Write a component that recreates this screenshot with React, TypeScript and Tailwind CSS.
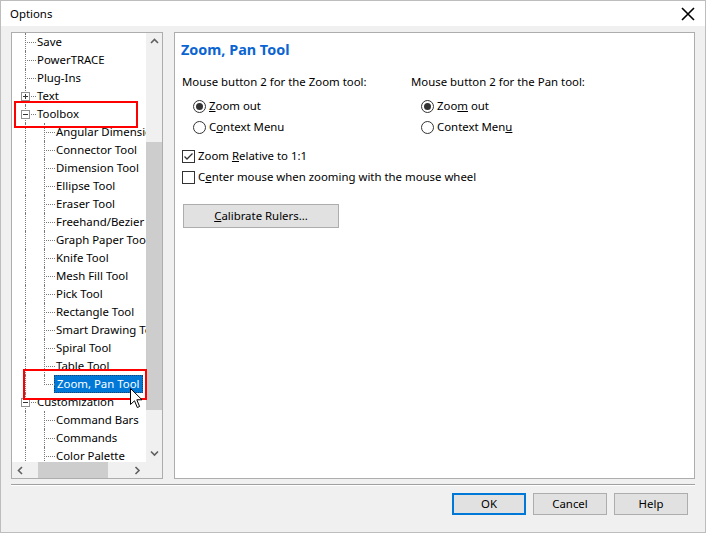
import React from 'react';

type Item = { t: string; l: 1 | 2; exp?: '+' | '-'; last?: boolean; sel?: boolean };

const items: Item[] = [
  { t: 'Save', l: 1 },
  { t: 'PowerTRACE', l: 1 },
  { t: 'Plug-Ins', l: 1 },
  { t: 'Text', l: 1, exp: '+' },
  { t: 'Toolbox', l: 1, exp: '-' },
  { t: 'Angular Dimension Tool', l: 2 },
  { t: 'Connector Tool', l: 2 },
  { t: 'Dimension Tool', l: 2 },
  { t: 'Ellipse Tool', l: 2 },
  { t: 'Eraser Tool', l: 2 },
  { t: 'Freehand/Bezier Tool', l: 2 },
  { t: 'Graph Paper Tool', l: 2 },
  { t: 'Knife Tool', l: 2 },
  { t: 'Mesh Fill Tool', l: 2 },
  { t: 'Pick Tool', l: 2 },
  { t: 'Rectangle Tool', l: 2 },
  { t: 'Smart Drawing Tool', l: 2 },
  { t: 'Spiral Tool', l: 2 },
  { t: 'Table Tool', l: 2 },
  { t: 'Zoom, Pan Tool', l: 2, last: true, sel: true },
  { t: 'Customization', l: 1, exp: '-' },
  { t: 'Command Bars', l: 2 },
  { t: 'Commands', l: 2 },
  { t: 'Color Palette', l: 2 },
];

function Row({ it }: { it: Item }) {
  return (
    <div className="relative h-[18px] flex items-center whitespace-nowrap">
      <span className="absolute left-[13px] top-0 h-[18px] border-l border-dotted border-[#7a7a7a]" />
      {it.l === 1 && <span className="absolute left-[15px] top-[9px] w-[9px] border-t border-dotted border-[#7a7a7a]" />}
      {it.exp && (
        <span className="absolute left-[9px] top-[5px] w-[9px] h-[9px] border border-[#919191] bg-white">
          <span className="absolute left-[1px] top-[3px] w-[5px] h-px bg-[#333]" />
          {it.exp === '+' && <span className="absolute left-[3px] top-[1px] w-px h-[5px] bg-[#333]" />}
        </span>
      )}
      {it.l === 2 && (
        <>
          <span
            className={
              it.last
                ? 'absolute left-[32px] top-0 h-[10px] border-l border-dotted border-[#7a7a7a]'
                : 'absolute left-[32px] top-0 h-[18px] border-l border-dotted border-[#7a7a7a]'
            }
          />
          <span className="absolute left-[34px] top-[9px] w-[9px] border-t border-dotted border-[#7a7a7a]" />
        </>
      )}
      {it.l === 1 ? (
        <span className="ml-[25px] leading-[18px]">{it.t}</span>
      ) : it.sel ? (
        <span className="ml-[42px] h-[18px] leading-[16px] px-[2px] bg-[#0078d7] text-white border border-dotted border-[#1c3f66]">
          {it.t}
        </span>
      ) : (
        <span className="ml-[44px] leading-[18px]">{it.t}</span>
      )}
    </div>
  );
}

function Chevron({ dir }: { dir: 'up' | 'down' | 'left' | 'right' }) {
  const d =
    dir === 'up'
      ? 'M1 5 L4.5 1.5 L8 5'
      : dir === 'down'
      ? 'M1 1.5 L4.5 5 L8 1.5'
      : dir === 'left'
      ? 'M5 1 L1.5 4.5 L5 8'
      : 'M1.5 1 L5 4.5 L1.5 8';
  const horiz = dir === 'up' || dir === 'down';
  return (
    <svg width={horiz ? 9 : 7} height={horiz ? 7 : 9} viewBox={horiz ? '0 0 9 7' : '0 0 7 9'}>
      <path d={d} fill="none" stroke="#606060" strokeWidth="1.6" />
    </svg>
  );
}

function Radio({ checked }: { checked?: boolean }) {
  return (
    <span className="w-[13px] h-[13px] rounded-full border border-[#333] bg-white flex items-center justify-center shrink-0">
      {checked && <span className="w-[7px] h-[7px] rounded-full bg-[#333]" />}
    </span>
  );
}

function Check({ checked }: { checked?: boolean }) {
  return (
    <span className="w-[13px] h-[13px] border border-[#333] bg-white flex items-center justify-center shrink-0">
      {checked && (
        <svg width="11" height="11" viewBox="0 0 11 11">
          <path d="M1.5 5.5 L4 8 L9.5 2.5" fill="none" stroke="#333" strokeWidth="1.3" />
        </svg>
      )}
    </span>
  );
}

export default function App() {
  return (
    <div className="w-[706px] h-[533px] relative flex flex-col bg-[#f0f0f0] border border-[#bdbdbd] text-[11.4px] text-black font-['Noto_Sans','Liberation_Sans',sans-serif] overflow-hidden">
      {/* Title bar */}
      <div className="h-[25px] bg-white flex items-center justify-between pl-[9px] pr-[10px]">
        <span>Options</span>
        <svg width="14" height="14" viewBox="0 0 14 14">
          <path d="M1 1 L13 13 M13 1 L1 13" stroke="#000" strokeWidth="1.6" />
        </svg>
      </div>

      {/* Body */}
      <div className="flex pt-[6px] pl-[10px] gap-[11px]">
        {/* Tree */}
        <div className="w-[152px] h-[447px] border border-[#adadad] bg-white flex flex-col">
          <div className="flex h-[429px]">
            <div className="w-[134px] h-[429px] overflow-hidden">
              {items.map((it, i) => (
                <Row key={i} it={it} />
              ))}
            </div>
            <div className="w-[16px] h-[429px] bg-[#f0f0f0] flex flex-col">
              <div className="h-[17px] flex items-center justify-center">
                <Chevron dir="up" />
              </div>
              <div className="flex-1">
                <div className="mt-[92px] h-[268px] bg-[#cdcdcd]" />
              </div>
              <div className="h-[17px] flex items-center justify-center">
                <Chevron dir="down" />
              </div>
            </div>
          </div>
          <div className="flex h-[16px]">
            <div className="w-[134px] h-[16px] bg-[#f0f0f0] flex">
              <div className="w-[17px] flex items-center justify-center">
                <Chevron dir="left" />
              </div>
              <div className="flex-1">
                <div className="ml-[9px] w-[70px] h-[16px] bg-[#cdcdcd]" />
              </div>
              <div className="w-[17px] flex items-center justify-center">
                <Chevron dir="right" />
              </div>
            </div>
            <div className="w-[16px] h-[16px] bg-[#f0f0f0]" />
          </div>
        </div>

        {/* Panel */}
        <div className="w-[521px] h-[447px] border border-[#adadad] bg-white flex flex-col">
          <div className="mt-[7px] ml-[6px] h-[20px] leading-[20px] text-[14.4px] font-bold text-[#0a64d2]">
            Zoom, Pan Tool
          </div>
          <div className="mt-[13px] ml-[7px] flex">
            <div className="w-[229px] flex flex-col">
              <div className="h-[18px] leading-[18px]">Mouse button 2 for the Zoom tool:</div>
              <div className="mt-[6px] ml-[11px] flex flex-col gap-[3px]">
                <div className="h-[18px] flex items-center gap-[3px]">
                  <Radio checked />
                  <span>
                    <span className="underline">Z</span>oom out
                  </span>
                </div>
                <div className="h-[18px] flex items-center gap-[3px]">
                  <Radio />
                  <span>
                    C<span className="underline">o</span>ntext Menu
                  </span>
                </div>
              </div>
            </div>
            <div className="flex flex-col">
              <div className="h-[18px] leading-[18px]">Mouse button 2 for the Pan tool:</div>
              <div className="mt-[6px] ml-[10px] flex flex-col gap-[3px]">
                <div className="h-[18px] flex items-center gap-[3px]">
                  <Radio checked />
                  <span>
                    Zoo<span className="underline">m</span> out
                  </span>
                </div>
                <div className="h-[18px] flex items-center gap-[3px]">
                  <Radio />
                  <span>
                    Context Men<span className="underline">u</span>
                  </span>
                </div>
              </div>
            </div>
          </div>
          <div className="mt-[11px] ml-[7px] flex flex-col gap-[3px]">
            <div className="h-[18px] flex items-center gap-[3px]">
              <Check checked />
              <span>
                Zoom <span className="underline">R</span>elative to 1:1
              </span>
            </div>
            <div className="h-[18px] flex items-center gap-[3px]">
              <Check />
              <span>
                C<span className="underline">e</span>nter mouse when zooming with the mouse wheel
              </span>
            </div>
          </div>
          <div className="mt-[18px] ml-[8px] w-[156px] h-[24px] border border-[#adadad] bg-[#e1e1e1] flex items-center justify-center">
            <span>
              <span className="underline">C</span>alibrate Rulers...
            </span>
          </div>
        </div>
      </div>

      {/* Separator */}
      <div className="mt-[5px] ml-[10px] w-[684px] border-t border-[#a0a0a0] border-b border-b-white" />

      {/* Buttons */}
      <div className="mt-[7px] flex justify-end gap-[7px] pr-[17px]">
        <div className="w-[74px] h-[22px] border-2 border-[#0078d7] bg-[#e1e1e1] flex items-center justify-center">OK</div>
        <div className="w-[74px] h-[22px] border border-[#adadad] bg-[#e1e1e1] flex items-center justify-center">Cancel</div>
        <div className="w-[74px] h-[22px] border border-[#adadad] bg-[#e1e1e1] flex items-center justify-center">Help</div>
      </div>

      {/* Annotations */}
      <div className="absolute left-[13px] top-[100px] w-[124px] h-[27px] border-2 border-[#ff0000]" />
      <div className="absolute left-[22px] top-[368px] w-[124px] h-[31px] border-2 border-[#ff0000]" />
      <svg className="absolute left-[129px] top-[387px]" width="13" height="21" viewBox="0 0 13 21">
        <path d="M0.5 0.5 L0.5 16.5 L4.5 12.8 L7.3 19.5 L9.6 18.5 L6.8 11.8 L12 11.8 Z" fill="#fff" stroke="#000" strokeWidth="1" />
      </svg>
    </div>
  );
}
